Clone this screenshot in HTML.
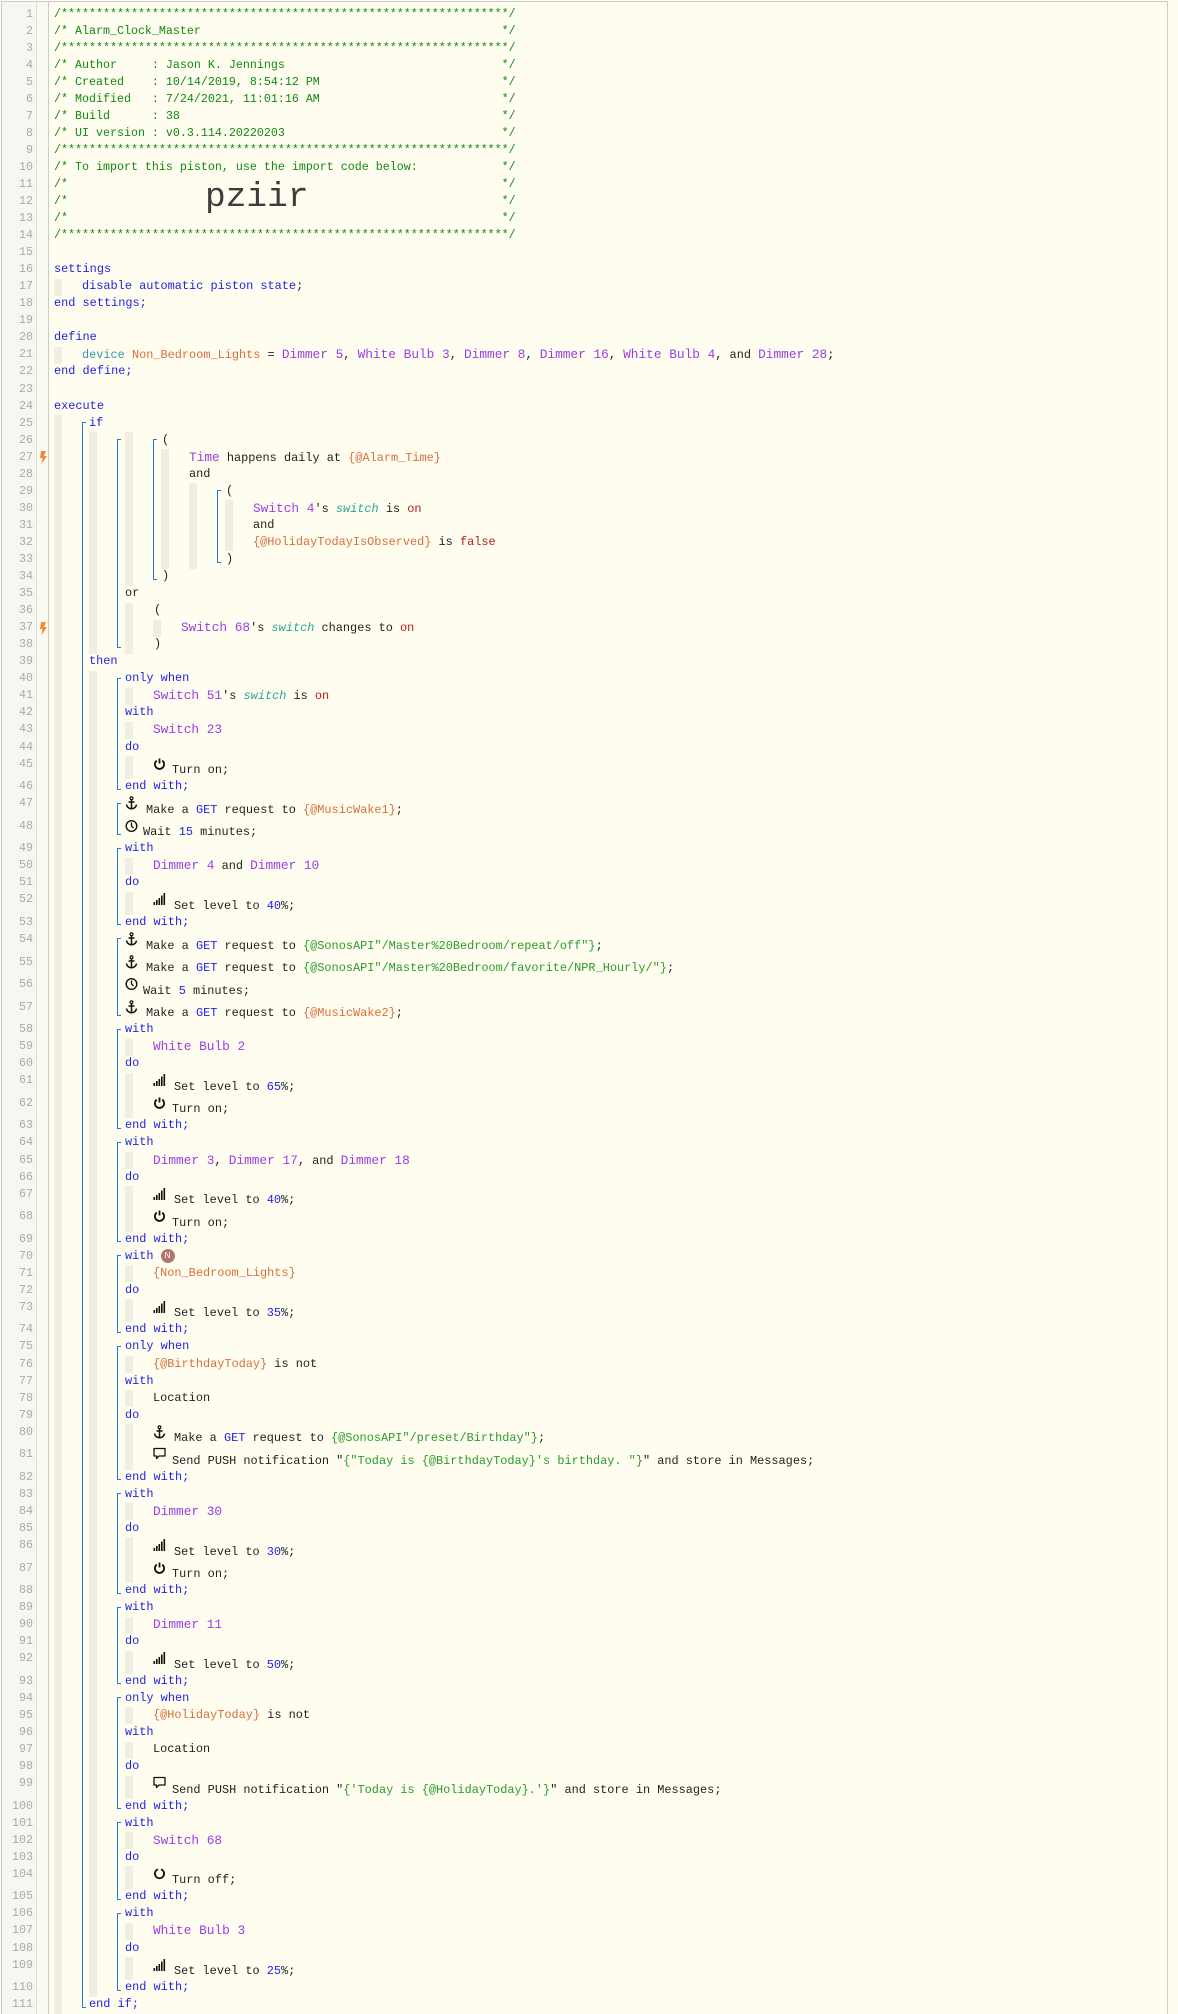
<!DOCTYPE html>
<html><head><meta charset="utf-8">
<style>
html,body{margin:0;padding:0;background:#fff;}
#wrap{position:relative;width:1178px;height:2014px;overflow:hidden;background:#fffdf0;font-family:"Liberation Mono","DejaVu Sans Mono",monospace;font-size:11.9px;color:#222;}
#frame{position:absolute;left:1px;top:1px;width:1167px;height:2030px;border:1px solid #ccc;box-sizing:border-box;}
#g1{position:absolute;left:2px;top:2px;width:34px;height:2030px;background:#f6f6f3;border-right:1px solid #ddd;}
#g2{position:absolute;left:37px;top:2px;width:11px;height:2030px;background:#fbfaf0;border-right:1px solid #ccc;}
#lines{position:absolute;left:0;top:5.5px;width:1168px;}
.l{position:relative;height:17.05px;line-height:17.05px;white-space:pre;}
.l.i{height:22.55px;}
.l.i .t{position:absolute;top:auto;bottom:0;line-height:15px;}
.t{position:absolute;top:0;}
.num{position:absolute;left:2px;width:31px;text-align:right;color:#aaa;top:0;font-size:11.67px;}
.l.i .num{top:0;line-height:17.05px}
.ic{position:absolute;top:1px;width:13px;height:14px;}
.ic svg{width:13px;height:14px;display:block}
.k{color:#2323e6}.c{color:#118a11;font-size:11.67px}.d{color:#9a3ee6;font-size:12.8px}.v{color:#d8703a}.s{color:#2a9d2a}.o{color:#b81c1c}.it{color:#26a69a;font-style:italic}.dv{color:#3399aa}
.bar{position:absolute;width:8px;background:#f0eee3;}
.br{position:absolute;width:0;border-left:1.3px solid #1f7ad8;}
.tk{position:absolute;width:4px;height:0;border-top:1.3px solid #1f7ad8;}
#pz{position:absolute;left:205px;top:178px;font-size:34.5px;line-height:40px;color:#3c3c3c;}
.bolt{position:absolute;left:39px;width:9px;height:13px;}
.badge{display:inline-block;width:14px;height:14px;border-radius:7px;background:#b5756c;color:#fff;font-size:8px;line-height:14px;text-align:center;font-family:"Liberation Sans",sans-serif;vertical-align:middle;margin-left:7px;}
</style></head><body>
<div id="wrap">
<div id="frame"></div><div id="g1"></div><div id="g2"></div>
<div id="deco"></div>
<div id="lines"></div>
<div id="pz">pziir</div>
</div>
<script>
(function(){
function k(t){return '<span class="k">'+t+'</span>'}
function d(t){return '<span class="d">'+t+'</span>'}
function v(t){return '<span class="v">'+t+'</span>'}
function s(t){return '<span class="s">'+t+'</span>'}
function o(t){return '<span class="o">'+t+'</span>'}
function it(t){return '<span class="it">'+t+'</span>'}
function esc(t){return t.replace(/&/g,'&amp;').replace(/</g,'&lt;')}
function cm(t){var p=t;while(p.length<64)p+=' ';return '<span class="c">'+esc(p+'*/')+'</span>'}
var st='/';for(var q=0;q<64;q++)st+='*';st+='/';
var stars=st;
var SV={
pw:'<svg viewBox="0 0 13 14"><path d="M6.5 1.5v5" stroke="#111" stroke-width="1.8" fill="none"/><path d="M3.8 3.6A4.6 4.6 0 1 0 9.2 3.6" stroke="#111" stroke-width="1.8" fill="none"/></svg>',
off:'<svg viewBox="0 0 13 14"><path d="M5 2.3A4.6 4.6 0 1 0 8 2.3" stroke="#111" stroke-width="1.8" fill="none"/></svg>',
an:'<svg viewBox="0 0 13 14"><circle cx="6.5" cy="2.3" r="1.4" stroke="#111" stroke-width="1.2" fill="none"/><path d="M6.5 3.7v9M3.5 6h6M1.5 8.5c0.5 3 3 4.3 5 4.3s4.5-1.3 5-4.3" stroke="#111" stroke-width="1.5" fill="none"/></svg>',
ck:'<svg viewBox="0 0 13 14"><circle cx="6.5" cy="7" r="5.3" stroke="#111" stroke-width="1.4" fill="none"/><path d="M6.5 3.5V7l2 2" stroke="#111" stroke-width="1.3" fill="none"/></svg>',
lv:'<svg viewBox="0 0 13 14"><rect x="0.5" y="10" width="1.6" height="3" fill="#111"/><rect x="3" y="8" width="1.6" height="5" fill="#111"/><rect x="5.5" y="6" width="1.6" height="7" fill="#111"/><rect x="8" y="3.5" width="1.6" height="9.5" fill="#111"/><rect x="10.5" y="1" width="1.6" height="12" fill="#111"/></svg>',
ms:'<svg viewBox="0 0 13 14"><path d="M1 1.5h11v7.5H6L3.5 11.5V9H1z" stroke="#111" stroke-width="1.3" fill="none" stroke-linejoin="round"/></svg>'
};
var L=[
[54,'<span class="c">'+stars+'</span>'],
[54,cm('/* Alarm_Clock_Master')],
[54,'<span class="c">'+stars+'</span>'],
[54,cm('/* Author     : Jason K. Jennings')],
[54,cm('/* Created    : 10/14/2019, 8:54:12 PM')],
[54,cm('/* Modified   : 7/24/2021, 11:01:16 AM')],
[54,cm('/* Build      : 38')],
[54,cm('/* UI version : v0.3.114.20220203')],
[54,'<span class="c">'+stars+'</span>'],
[54,cm('/* To import this piston, use the import code below:')],
[54,cm('/*')],[54,cm('/*')],[54,cm('/*')],
[54,'<span class="c">'+stars+'</span>'],
[54,''],
[54,k('settings')],
[82,k('disable automatic piston state')+';'],
[54,k('end settings;')],
[54,''],
[54,k('define')],
[82,'<span class="dv">device</span> '+v('Non_Bedroom_Lights')+' = '+d('Dimmer 5')+', '+d('White Bulb 3')+', '+d('Dimmer 8')+', '+d('Dimmer 16')+', '+d('White Bulb 4')+', and '+d('Dimmer 28')+';'],
[54,k('end define;')],
[54,''],
[54,k('execute')],
[89,k('if')],
[162,'('],
[189,d('Time')+' happens daily at '+v('{@Alarm_Time}')],
[189,'and'],
[226,'('],
[253,d('Switch 4')+"'s "+it('switch')+' is '+o('on')],
[253,'and'],
[253,v('{@HolidayTodayIsObserved}')+' is '+o('false')],
[226,')'],
[162,')'],
[125,'or'],
[154,'('],
[181,d('Switch 68')+"'s "+it('switch')+' changes to '+o('on')],
[154,')'],
[89,k('then')],
[125,k('only when')],
[153,d('Switch 51')+"'s "+it('switch')+' is '+o('on')],
[125,k('with')],
[153,d('Switch 23')],
[125,k('do')],
[153,'Turn on;','pw'],
[125,k('end with;')],
[125,'Make a '+k('GET')+' request to '+v('{@MusicWake1}')+';','an'],
[125,'Wait '+k('15')+' minutes;','ck'],
[125,k('with')],
[153,d('Dimmer 4')+' and '+d('Dimmer 10')],
[125,k('do')],
[153,'Set level to '+k('40')+'%;','lv'],
[125,k('end with;')],
[125,'Make a '+k('GET')+' request to '+s('{@SonosAPI"/Master%20Bedroom/repeat/off"}')+';','an'],
[125,'Make a '+k('GET')+' request to '+s('{@SonosAPI"/Master%20Bedroom/favorite/NPR_Hourly/"}')+';','an'],
[125,'Wait '+k('5')+' minutes;','ck'],
[125,'Make a '+k('GET')+' request to '+v('{@MusicWake2}')+';','an'],
[125,k('with')],
[153,d('White Bulb 2')],
[125,k('do')],
[153,'Set level to '+k('65')+'%;','lv'],
[153,'Turn on;','pw'],
[125,k('end with;')],
[125,k('with')],
[153,d('Dimmer 3')+', '+d('Dimmer 17')+', and '+d('Dimmer 18')],
[125,k('do')],
[153,'Set level to '+k('40')+'%;','lv'],
[153,'Turn on;','pw'],
[125,k('end with;')],
[125,k('with')+'<span class="badge">N</span>'],
[153,v('{Non_Bedroom_Lights}')],
[125,k('do')],
[153,'Set level to '+k('35')+'%;','lv'],
[125,k('end with;')],
[125,k('only when')],
[153,v('{@BirthdayToday}')+' is not'],
[125,k('with')],
[153,'Location'],
[125,k('do')],
[153,'Make a '+k('GET')+' request to '+s('{@SonosAPI"/preset/Birthday"}')+';','an'],
[153,'Send PUSH notification "'+s('{"Today is {@BirthdayToday}\'s birthday. "}')+'" and store in Messages;','ms'],
[125,k('end with;')],
[125,k('with')],
[153,d('Dimmer 30')],
[125,k('do')],
[153,'Set level to '+k('30')+'%;','lv'],
[153,'Turn on;','pw'],
[125,k('end with;')],
[125,k('with')],
[153,d('Dimmer 11')],
[125,k('do')],
[153,'Set level to '+k('50')+'%;','lv'],
[125,k('end with;')],
[125,k('only when')],
[153,v('{@HolidayToday}')+' is not'],
[125,k('with')],
[153,'Location'],
[125,k('do')],
[153,'Send PUSH notification "'+s("{'Today is {@HolidayToday}.'}")+'" and store in Messages;','ms'],
[125,k('end with;')],
[125,k('with')],
[153,d('Switch 68')],
[125,k('do')],
[153,'Turn off;','off'],
[125,k('end with;')],
[125,k('with')],
[153,d('White Bulb 3')],
[125,k('do')],
[153,'Set level to '+k('25')+'%;','lv'],
[125,k('end with;')],
[89,k('end if;')]
];
var h='';
for(var i=0;i<L.length;i++){
 var x=L[i][0],c=L[i][1],ic=L[i][2];
 if(ic){
  var tx=x+21;
  if(ic=='ck')tx=x+18;
  if(ic=='pw'||ic=='off'||ic=='ms')tx=x+19;
  h+='<div class="l i"><span class="num">'+(i+1)+'</span><span class="ic" style="left:'+x+'px">'+SV[ic]+'</span><span class="t" style="left:'+tx+'px">'+c+'</span></div>';
 } else {
  h+='<div class="l"><span class="num">'+(i+1)+'</span><span class="t" style="left:'+x+'px">'+c+'</span></div>';
 }
}
document.getElementById('lines').innerHTML=h;
var rows=document.querySelectorAll('#lines .l');
var base=5.5;
function yTop(n){return base+rows[n-1].offsetTop;}
function yBot(n){var r=rows[n-1];return base+r.offsetTop+r.offsetHeight;}
var D='';
var bars=[[54,17,17],[54,21,21],[54,25,111],[89,26,38],[125,26,34],[161,27,33],[189,29,33],[225,30,32],[125,36,38],[153,37,37],[89,40,110],
[125,41,41],[125,43,43],[125,45,45],[125,50,50],[125,52,52],[125,59,59],[125,61,62],[125,65,65],[125,67,68],[125,71,71],[125,73,73],
[125,76,76],[125,78,78],[125,80,81],[125,84,84],[125,86,87],[125,90,90],[125,92,92],[125,95,95],[125,97,97],[125,99,99],[125,102,102],[125,104,104],[125,107,107],[125,109,109]];
for(var b=0;b<bars.length;b++){var B=bars[b];D+='<div class="bar" style="left:'+B[0]+'px;top:'+yTop(B[1])+'px;height:'+(yBot(B[2])-yTop(B[1]))+'px"></div>';}
var brs=[[82,25,111],[117,26,38],[153,26,34],[217,29,33],[117,40,46],[117,47,48],[117,49,53],[117,54,57],[117,58,63],[117,64,69],[117,70,74],[117,75,82],[117,83,88],[117,89,93],[117,94,100],[117,101,105],[117,106,110]];
for(var r=0;r<brs.length;r++){
 var R=brs[r];var y1=yTop(R[1])+7,y2=yBot(R[2])-6;
 D+='<div class="br" style="left:'+R[0]+'px;top:'+y1+'px;height:'+(y2-y1)+'px"></div>';
 D+='<div class="tk" style="left:'+R[0]+'px;top:'+y1+'px"></div>';
 D+='<div class="tk" style="left:'+R[0]+'px;top:'+(y2-1)+'px"></div>';
}
var bl=[27,37];
for(var j=0;j<bl.length;j++){D+='<svg class="bolt" style="top:'+(yTop(bl[j])+2)+'px" viewBox="0 0 9 13"><path d="M2 0h5L5 5h3L2.5 13 3.5 7H1z" fill="#f4883a"/></svg>';}
document.getElementById('deco').innerHTML=D;
})();
</script>
</body></html>
